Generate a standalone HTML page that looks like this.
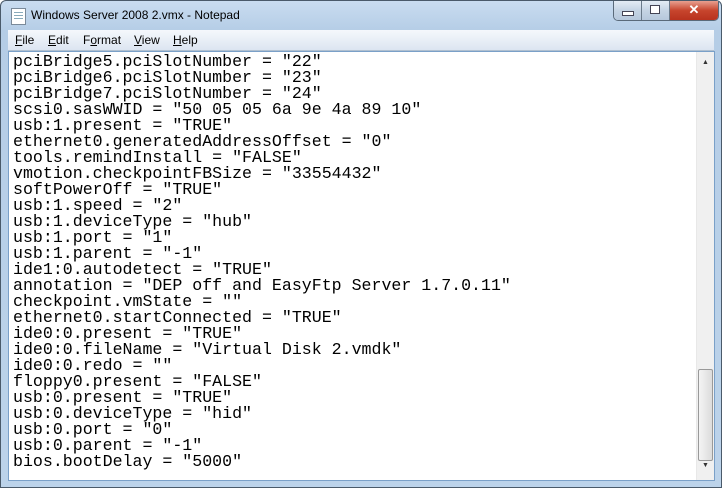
<!DOCTYPE html>
<html><head><meta charset="utf-8"><style>
body{margin:0;width:722px;height:488px;overflow:hidden;background:#fff;font-family:"Liberation Sans",sans-serif}
.win{position:absolute;left:0;top:0;width:720px;height:486px;border:1px solid #4a5a6a;border-radius:6px 6px 0 0;background:linear-gradient(#c9dcf0,#b5cde6 30px,#bcd3ea);}
.title{position:absolute;left:30px;top:7px;font-size:12px;color:#000}
.icon{position:absolute;left:10px;top:7px;width:13px;height:15px;background:#fff;border:1px solid #7a8a9a;}
.icon:before{content:"";position:absolute;left:2px;top:3px;width:9px;height:8px;background:repeating-linear-gradient(#8ab 0 1px,transparent 1px 3px)}
.btns{position:absolute;left:612px;top:0;height:19px;width:104px;border:1px solid #5a6a7a;border-top:none;border-radius:0 0 5px 5px;overflow:hidden;display:flex}
.b{width:27px;background:linear-gradient(#e4ecf5,#c5d4e4 50%,#b6c8dc);border-right:1px solid #6a7a8a;position:relative}
.x{flex:1;background:linear-gradient(#e8a090,#c7452d 50%,#b8321e);color:#fff;font-weight:bold;text-align:center;font-size:13px;line-height:18px}
.menu{position:absolute;left:7px;top:29px;width:706px;height:20px;background:linear-gradient(#f5f8fc,#dce5f1);font-size:12px;border-bottom:1px solid #b0c0d0}
.menu span{position:absolute;top:3px}
.ed{position:absolute;left:7px;top:50px;width:705px;height:428px;background:#fff;border:1px solid #7aa0c8;}
pre{margin:0;position:absolute;left:4px;top:2px;font-family:"Liberation Mono",monospace;font-size:16.6px;line-height:16px;color:#000}
.sb{position:absolute;right:0;top:0;width:17px;height:428px;background:#f0f0f0;border-left:1px solid #e8e8e8}
.th{position:absolute;left:1px;top:317px;width:13px;height:90px;border:1px solid #999;border-radius:2px;background:linear-gradient(90deg,#f4f4f4,#dcdcdc)}
</style></head><body>
<div class="win">
<div class="icon"></div>
<div class="title">Windows Server 2008 2.vmx - Notepad</div>
<div class="btns"><div class="b"><div style="position:absolute;left:8px;top:10px;width:10px;height:3px;border:1px solid #445;background:#fff"></div></div><div class="b"><div style="position:absolute;left:8px;top:4px;width:8px;height:7px;border:1px solid #445;background:#fff"></div></div><div class="x">✕</div></div>
<div class="menu"><span style="left:7px"><u>F</u>ile</span><span style="left:40px"><u>E</u>dit</span><span style="left:75px">F<u>o</u>rmat</span><span style="left:126px"><u>V</u>iew</span><span style="left:165px"><u>H</u>elp</span></div>
<div class="ed"><pre>pciBridge5.pciSlotNumber = "22"
pciBridge6.pciSlotNumber = "23"
pciBridge7.pciSlotNumber = "24"
scsi0.sasWWID = "50 05 05 6a 9e 4a 89 10"
usb:1.present = "TRUE"
ethernet0.generatedAddressOffset = "0"
tools.remindInstall = "FALSE"
vmotion.checkpointFBSize = "33554432"
softPowerOff = "TRUE"
usb:1.speed = "2"
usb:1.deviceType = "hub"
usb:1.port = "1"
usb:1.parent = "-1"
ide1:0.autodetect = "TRUE"
annotation = "DEP off and EasyFtp Server 1.7.0.11"
checkpoint.vmState = ""
ethernet0.startConnected = "TRUE"
ide0:0.present = "TRUE"
ide0:0.fileName = "Virtual Disk 2.vmdk"
ide0:0.redo = ""
floppy0.present = "FALSE"
usb:0.present = "TRUE"
usb:0.deviceType = "hid"
usb:0.port = "0"
usb:0.parent = "-1"
bios.bootDelay = "5000"</pre>
<div class="sb"><div style="position:absolute;left:5px;top:7px;font-size:7px;color:#333">▲</div><div class="th"></div><div style="position:absolute;left:5px;top:410px;font-size:7px;color:#333">▼</div></div>
</div>
</div>
</body></html>
